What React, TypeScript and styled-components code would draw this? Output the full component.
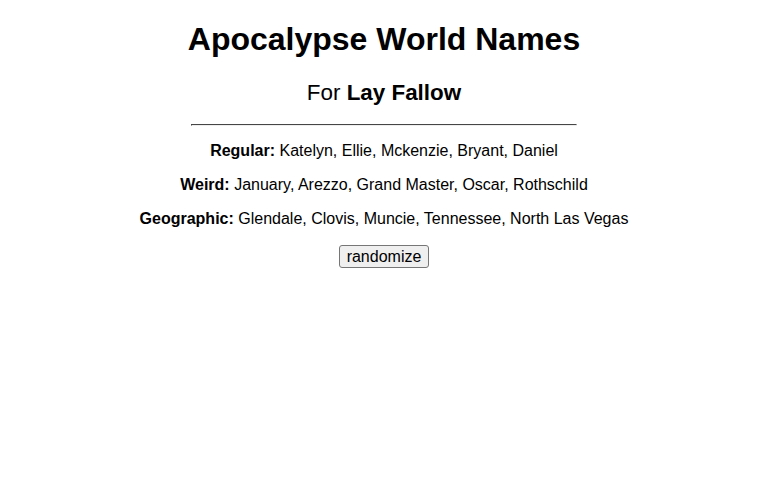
import React, { useState } from "react";
import styled, { createGlobalStyle } from "styled-components";

const GlobalStyle = createGlobalStyle`
  html, body {
    margin: 0;
    background: #ffffff;
    color: #000000;
    font-family: "Liberation Sans", Arial, sans-serif;
  }
`;

const Page = styled.main`
  padding: 0 8px;
  text-align: center;
`;

const Title = styled.h1`
  font-size: 32px;
  font-weight: bold;
  margin: 21.44px 0;
`;

const Subtitle = styled.h2`
  font-size: 22.4px;
  font-weight: normal;
  margin: 18.6px 0;
`;

const Strong = styled.b`
  font-weight: bold;
`;

const Rule = styled.hr`
  width: 384px;
  margin: 8px auto;
  border-style: inset;
  border-width: 1px;
  border-color: #9a9a9a #eeeeee #eeeeee #9a9a9a;
`;

const NameLine = styled.p`
  font-size: 16px;
  margin: 16px 0;
`;

const Button = styled.button`
  font-family: "Liberation Sans", Arial, sans-serif;
  font-size: 16px;
  padding: 2px 7px 1px;
  margin-top: 1px;
  color: #000;
  background: #efefef;
  border: 1px solid #767676;
  border-radius: 3px;
`;

const lists = [
  { label: "Regular", names: ["Katelyn", "Ellie", "Mckenzie", "Bryant", "Daniel"] },
  { label: "Weird", names: ["January", "Arezzo", "Grand Master", "Oscar", "Rothschild"] },
  { label: "Geographic", names: ["Glendale", "Clovis", "Muncie", "Tennessee", "North Las Vegas"] },
];

export default function App() {
  const [data] = useState(lists);
  return (
    <>
      <GlobalStyle />
      <Page>
        <Title>Apocalypse World Names</Title>
        <Subtitle>
          For <Strong>Lay Fallow</Strong>
        </Subtitle>
        <Rule />
        {data.map((row) => (
          <NameLine key={row.label}>
            <Strong>{row.label}:</Strong> {row.names.join(", ")}
          </NameLine>
        ))}
        <Button type="button">randomize</Button>
      </Page>
    </>
  );
}
